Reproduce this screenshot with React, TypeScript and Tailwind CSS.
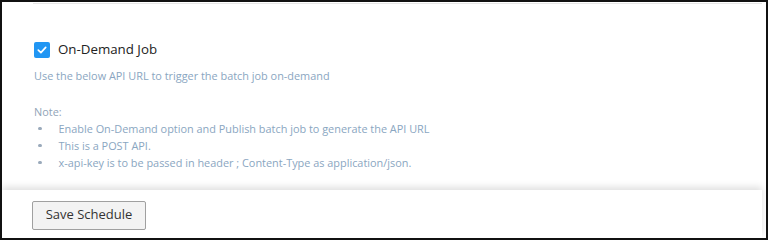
import React from "react";

export default function App() {
  const font = { fontFamily: '"Open Sans", "Noto Sans", sans-serif' };
  return (
    <div
      className="w-[768px] h-[240px] bg-white border-t-2 border-l-2 border-r-2 border-b-2 border-[#111] flex flex-col overflow-hidden"
      style={font}
    >
      <div className="ml-[31px] mr-[4px] mt-[1px] h-px bg-[#e6e6e6]" />
      <div className="flex-1 pl-[32px] pt-[37px]">
        <div className="flex items-center gap-[8px] h-[18px]">
          <div className="w-[16px] h-[16px] rounded-[2px] bg-[#2196f3] flex items-center justify-center">
            <svg width="12" height="12" viewBox="0 0 12 12" fill="none">
              <path d="M2.3 6.2 L4.9 8.6 L9.7 3.4" stroke="white" strokeWidth="1.7" strokeLinecap="round" strokeLinejoin="round" />
            </svg>
          </div>
          <span className="text-[13.3px] text-[#222] leading-none">On-Demand Job</span>
        </div>
        <div className="mt-[9px] text-[10.9px] text-[#8aa6c1] leading-[16px]">
          Use the below API URL to trigger the batch job on-demand
        </div>
        <div className="mt-[20px] text-[10.9px] text-[#91a4b7] leading-[16px]">Note:</div>
        <ul className="mt-[0px] text-[10.9px] text-[#8aa6c1] leading-[17px]">
          {[
            "Enable On-Demand option and Publish batch job to generate the API URL",
            "This is a POST API.",
            "x-api-key is to be passed in header ; Content-Type as application/json.",
          ].map((t) => (
            <li key={t} className="flex items-center">
              <span className="w-[3.5px] h-[3.5px] rounded-full bg-[#9aaabb] ml-[4px] mr-[17px]" />
              {t}
            </li>
          ))}
        </ul>
      </div>
      <div className="h-[48px] mr-[4px] bg-white shadow-[0_-3px_7px_rgba(0,0,0,0.13)] flex items-center pl-[30px]">
        <button className="w-[114px] h-[29px] mt-[2px] border border-[#a0a0a0] bg-[#f3f3f3] rounded-[2px] text-[13px] text-[#333]">
          Save Schedule
        </button>
      </div>
    </div>
  );
}
